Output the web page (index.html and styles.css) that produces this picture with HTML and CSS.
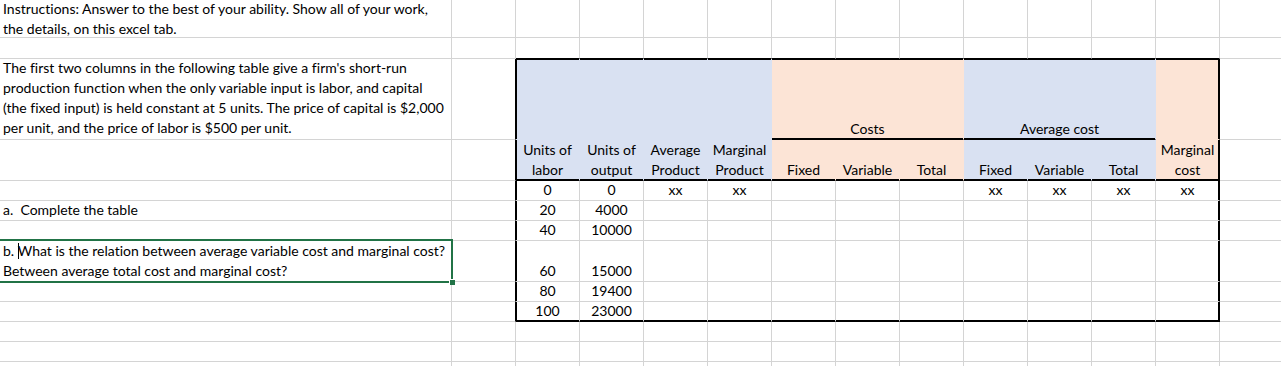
FILE: index.html
```html
<!DOCTYPE html>
<html lang="en">
<head>
<meta charset="utf-8">
<title>Short-run costs worksheet</title>
<link rel="stylesheet" href="styles.css">
</head>
<body>
<div class="sheet">
  <!-- Row 1 -->
  <div class="c txt top"><span>Instructions: Answer to the best of your ability. Show all of your work,<br>the details, on this excel tab.</span></div>
  <div class="c"></div><div class="c"></div><div class="c"></div><div class="c"></div><div class="c"></div><div class="c"></div><div class="c"></div><div class="c"></div><div class="c"></div><div class="c"></div><div class="c"></div><div class="c"></div><div class="c"></div>

  <!-- Row 2 -->
  <div class="c"></div><div class="c"></div>
  <div class="c kb"></div><div class="c kb"></div><div class="c kb"></div><div class="c kb"></div><div class="c kb"></div><div class="c kb"></div><div class="c kb"></div><div class="c kb"></div><div class="c kb"></div><div class="c kb"></div><div class="c kb"></div>
  <div class="c"></div>

  <!-- Row 3 -->
  <div class="c txt top"><span>The first two columns in the following table give a firm's short-run<br>production function when the only variable input is labor, and capital<br>(the fixed input) is held constant at 5 units. The price of capital is $2,000<br>per unit, and the price of labor is $500 per unit.</span></div>
  <div class="c kr"></div>
  <div class="c blue t1 l1"></div><div class="c blue t1"></div><div class="c blue t1"></div><div class="c blue t1"></div>
  <div class="c org t1 b1 kb span3">Costs</div>
  <div class="c blue t1 b1 kb span3">Average cost</div>
  <div class="c org t1 r1 kr"></div>
  <div class="c"></div>

  <!-- Row 4 -->
  <div class="c"></div>
  <div class="c kr"></div>
  <div class="c blue l1 b1 kb"><span>Units of<br>labor</span></div>
  <div class="c blue b1 kb"><span>Units of<br>output</span></div>
  <div class="c blue b1 kb"><span>Average<br>Product</span></div>
  <div class="c blue b1 kb"><span>Marginal<br>Product</span></div>
  <div class="c org b1 kb">Fixed</div>
  <div class="c org b1 kb">Variable</div>
  <div class="c org b1 kb">Total</div>
  <div class="c blue b1 kb">Fixed</div>
  <div class="c blue b1 kb">Variable</div>
  <div class="c blue b1 kb">Total</div>
  <div class="c org r1 kr b1 kb"><span>Marginal<br>cost</span></div>
  <div class="c"></div>

  <!-- Row 5 -->
  <div class="c"></div>
  <div class="c kr"></div>
  <div class="c l1">0</div><div class="c">0</div><div class="c">xx</div><div class="c">xx</div>
  <div class="c"></div><div class="c"></div><div class="c"></div>
  <div class="c">xx</div><div class="c">xx</div><div class="c">xx</div>
  <div class="c r1 kr">xx</div>
  <div class="c"></div>

  <!-- Row 6 -->
  <div class="c txt">a.&nbsp; Complete the table</div>
  <div class="c kr"></div>
  <div class="c l1">20</div><div class="c">4000</div>
  <div class="c"></div><div class="c"></div><div class="c"></div><div class="c"></div><div class="c"></div><div class="c"></div><div class="c"></div><div class="c"></div>
  <div class="c r1 kr"></div>
  <div class="c"></div>

  <!-- Row 7 -->
  <div class="c"></div>
  <div class="c kr"></div>
  <div class="c l1">40</div><div class="c">10000</div>
  <div class="c"></div><div class="c"></div><div class="c"></div><div class="c"></div><div class="c"></div><div class="c"></div><div class="c"></div><div class="c"></div>
  <div class="c r1 kr"></div>
  <div class="c"></div>

  <!-- Row 8 -->
  <div class="c txt sel"><span>b. <span class="caret"></span>What is the relation between average variable cost and marginal cost?<br>Between average total cost and marginal cost?</span><div class="selbox"><div class="handle"></div></div></div>
  <div class="c kr"></div>
  <div class="c l1">60</div><div class="c">15000</div>
  <div class="c"></div><div class="c"></div><div class="c"></div><div class="c"></div><div class="c"></div><div class="c"></div><div class="c"></div><div class="c"></div>
  <div class="c r1 kr"></div>
  <div class="c"></div>

  <!-- Row 9 -->
  <div class="c"></div>
  <div class="c kr"></div>
  <div class="c l1">80</div><div class="c">19400</div>
  <div class="c"></div><div class="c"></div><div class="c"></div><div class="c"></div><div class="c"></div><div class="c"></div><div class="c"></div><div class="c"></div>
  <div class="c r1 kr"></div>
  <div class="c"></div>

  <!-- Row 10 -->
  <div class="c"></div>
  <div class="c kr"></div>
  <div class="c l1 b1 kb">100</div><div class="c b1 kb">23000</div>
  <div class="c b1 kb"></div><div class="c b1 kb"></div><div class="c b1 kb"></div><div class="c b1 kb"></div><div class="c b1 kb"></div><div class="c b1 kb"></div><div class="c b1 kb"></div><div class="c b1 kb"></div>
  <div class="c r1 kr b1 kb"></div>
  <div class="c"></div>

  <!-- Row 11 -->
  <div class="c"></div><div class="c"></div><div class="c"></div><div class="c"></div><div class="c"></div><div class="c"></div><div class="c"></div><div class="c"></div><div class="c"></div><div class="c"></div><div class="c"></div><div class="c"></div><div class="c"></div><div class="c"></div>
  <!-- Row 12 -->
  <div class="c"></div><div class="c"></div><div class="c"></div><div class="c"></div><div class="c"></div><div class="c"></div><div class="c"></div><div class="c"></div><div class="c"></div><div class="c"></div><div class="c"></div><div class="c"></div><div class="c"></div><div class="c"></div>
  <!-- Row 13 -->
  <div class="c"></div><div class="c"></div><div class="c"></div><div class="c"></div><div class="c"></div><div class="c"></div><div class="c"></div><div class="c"></div><div class="c"></div><div class="c"></div><div class="c"></div><div class="c"></div><div class="c"></div><div class="c"></div>
</div>
</body>
</html>
```
FILE: styles.css
```css
html, body {
  margin: 0;
  padding: 0;
  background: #fff;
  overflow: hidden;
}

.sheet {
  display: grid;
  grid-template-columns: 452px repeat(13, 64px);
  grid-template-rows: 38px 21px 81px 41px 20px 20px 20px 41px 20px 20px 20px 20px 20px;
  font-family: Lato, "Liberation Sans", sans-serif;
  font-size: 14px;
  font-variant-ligatures: none;
  color: #000;
  width: 1281px;
}

.c {
  --t: 0px;
  --l: 0px;
  --r: 0px;
  --b: 0px;
  box-sizing: border-box;
  border-right: 1px solid #d4d4d4;
  border-bottom: 1px solid #d4d4d4;
  display: flex;
  align-items: flex-end;
  justify-content: center;
  text-align: center;
  line-height: 20px;
  white-space: nowrap;
  min-width: 0;
  box-shadow:
    inset 0 var(--t) 0 #000,
    inset var(--l) 0 0 #000,
    inset calc(-1 * var(--r)) 0 0 #000,
    inset 0 calc(-1 * var(--b)) 0 #000;
}

.txt {
  justify-content: flex-start;
  text-align: left;
  padding-left: 3px;
}

.top {
  align-items: flex-start;
}

.top > span {
  margin-top: -1px;
}

.span3 {
  grid-column: span 3;
}

.blue {
  background: #d9e1f2;
  border-color: transparent;
}

.org {
  background: #fce4d6;
  border-color: transparent;
}

/* medium table borders */
.kb { border-bottom-color: #000; }
.kr { border-right-color: #000; }
.t1 { --t: 1px; }
.l1 { --l: 1px; }
.r1 { --r: 1px; }
.b1 { --b: 1px; }

/* active cell */
.sel {
  position: relative;
}

.caret {
  display: inline-block;
  width: 1px;
  height: 16px;
  background: #000;
  vertical-align: -3px;
  margin-right: -1px;
}

.selbox {
  position: absolute;
  left: -2px;
  top: -2px;
  right: -2px;
  bottom: -2px;
  border: 2px solid #217346;
}

.handle {
  position: absolute;
  right: -4px;
  bottom: -4px;
  width: 5px;
  height: 5px;
  background: #217346;
  border: 1px solid #fff;
  border-right: none;
  border-bottom: none;
}
```
